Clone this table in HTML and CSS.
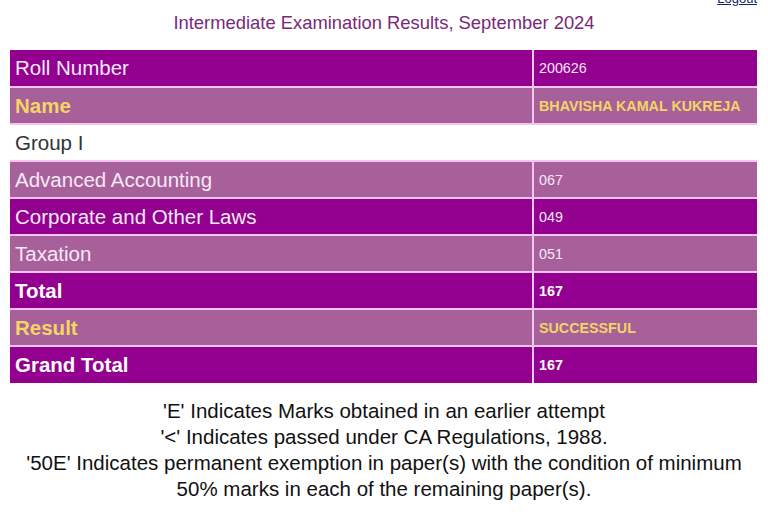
FILE: index.html
```
<!DOCTYPE html>
<html>
<head>
<meta charset="utf-8">
<link rel="stylesheet" href="styles.css">
</head>
<body>
<div class="top"><a class="logout" href="#">Logout</a></div>
<h1 class="title">Intermediate Examination Results, September 2024</h1>
<table class="results">
  <colgroup><col class="c1"><col class="c2"></colgroup>
  <tr class="dark"><td class="lbl">Roll Number</td><td class="val">200626</td></tr>
  <tr class="light hl"><td class="lbl b">Name</td><td class="val b">BHAVISHA KAMAL KUKREJA</td></tr>
  <tr class="white"><td class="lbl" colspan="2">Group I</td></tr>
  <tr class="light"><td class="lbl">Advanced Accounting</td><td class="val">067</td></tr>
  <tr class="dark"><td class="lbl">Corporate and Other Laws</td><td class="val">049</td></tr>
  <tr class="light"><td class="lbl">Taxation</td><td class="val">051</td></tr>
  <tr class="dark"><td class="lbl b">Total</td><td class="val b">167</td></tr>
  <tr class="light hl"><td class="lbl b">Result</td><td class="val b">SUCCESSFUL</td></tr>
  <tr class="dark"><td class="lbl b">Grand Total</td><td class="val b">167</td></tr>
</table>
<div class="notes">
  <p>'E' Indicates Marks obtained in an earlier attempt</p>
  <p>'&lt;' Indicates passed under CA Regulations, 1988.</p>
  <p>'50E' Indicates permanent exemption in paper(s) with the condition of minimum</p>
  <p>50% marks in each of the remaining paper(s).</p>
</div>
</body>
</html>
```
FILE: styles.css
```
html, body {
  margin: 0;
  padding: 0;
  background: #ffffff;
  font-family: "Liberation Sans", Arial, sans-serif;
}
.top {
  display: flex;
  justify-content: flex-end;
  height: 4px;
  overflow: visible;
  padding-right: 11px;
}
.logout {
  color: #1b1f6b;
  font-size: 13px;
  line-height: 13px;
  margin-top: -8px;
  text-decoration: underline;
}
.title {
  margin: 0;
  padding-top: 8px;
  height: 38px;
  text-align: center;
  font-size: 18.4px;
  font-weight: normal;
  color: #7a2878;
  line-height: 22px;
}
.results {
  margin-left: 10px;
  width: 747px;
  border-collapse: collapse;
  table-layout: fixed;
}
.c1 { width: 523px; }
.c2 { width: 224px; }
.results td {
  height: 37px;
  box-sizing: border-box;
  border: 2px solid #f3c6f1;
  padding: 0;
  vertical-align: middle;
  color: #f6e9f6;
  white-space: nowrap;
}
.results tr:first-child td { border-top: none; }
.results td:first-child { border-left: none; }
.results td:last-child { border-right: none; }
.results tr:last-child td { border-bottom: none; }
.lbl {
  font-size: 20.5px;
  padding-left: 5px !important;
}
.val {
  font-size: 14.3px;
  padding-left: 5px !important;
}
.b { font-weight: bold; }
.dark td { background: #930090; }
.light td { background: #a8609b; }
.white td { background: #ffffff; color: #333333; }
.hl td { color: #f3d564; }
.dark .b { color: #ffffff; }
.notes {
  padding-top: 15px;
  text-align: center;
  color: #111111;
  font-size: 20.5px;
  line-height: 26px;
}
.notes p { margin: 0; }
```
